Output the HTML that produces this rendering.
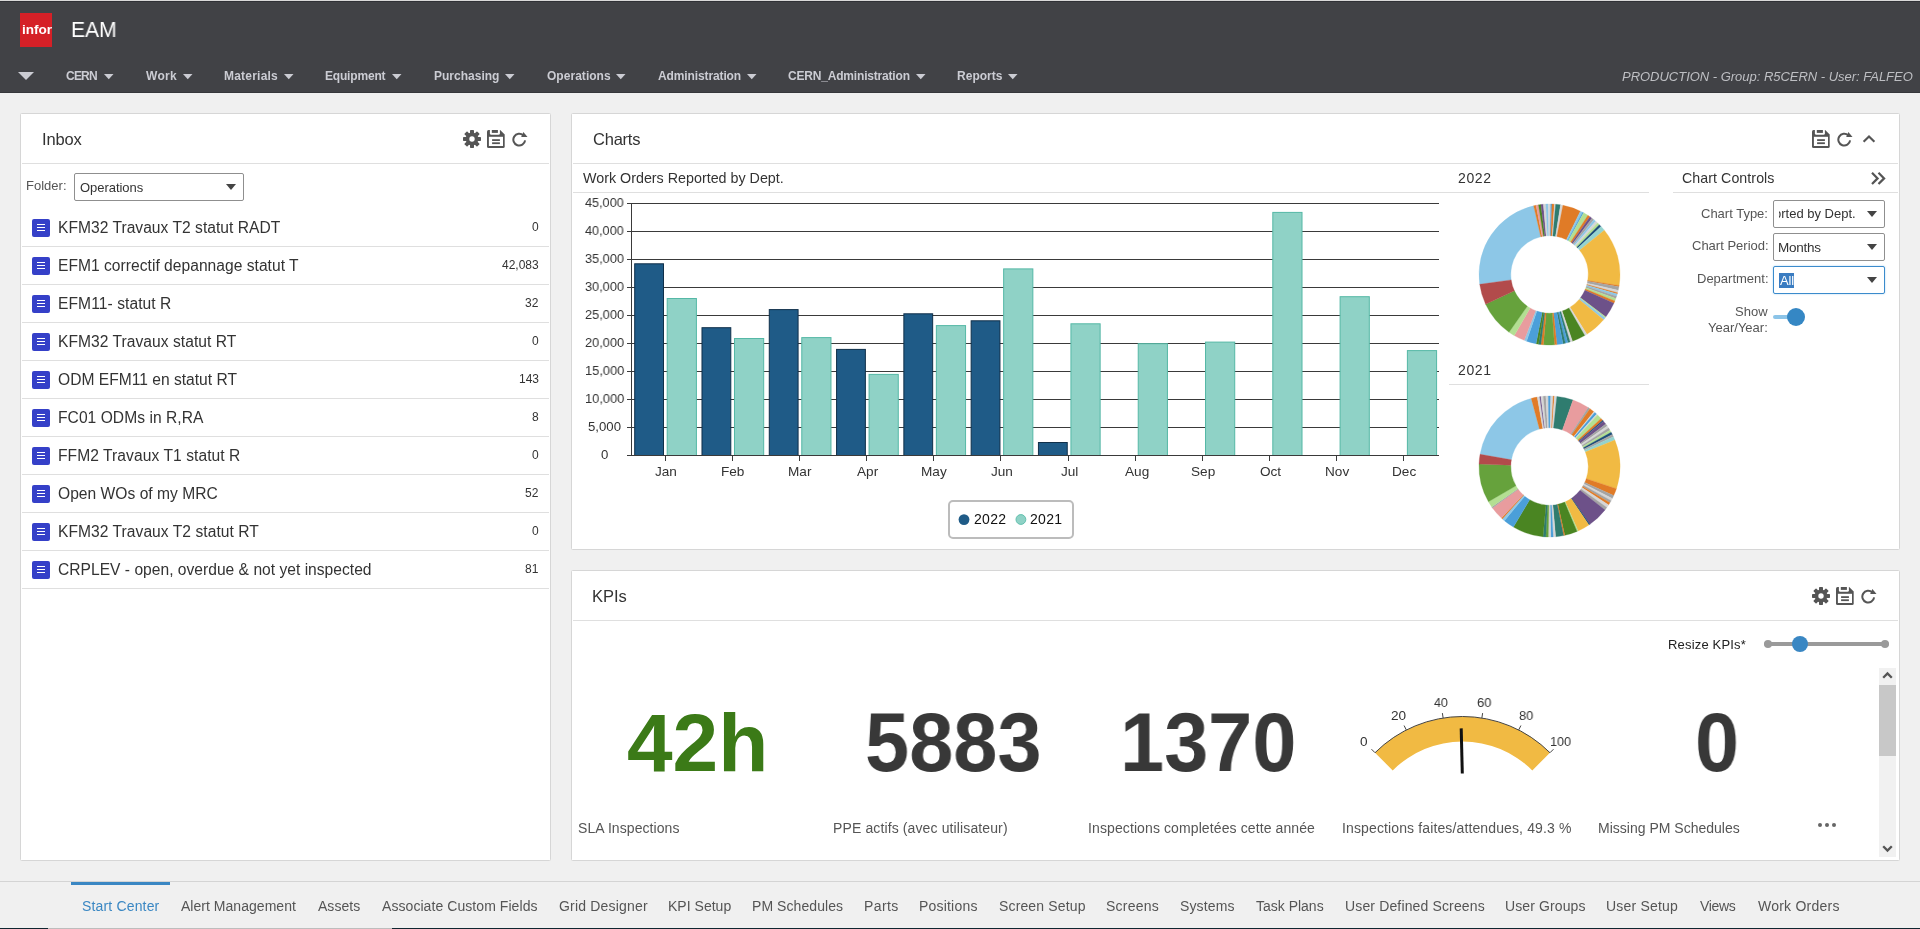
<!DOCTYPE html>
<html><head><meta charset="utf-8"><title>EAM</title>
<style>
html,body{margin:0;padding:0;}
body{width:1920px;height:929px;overflow:hidden;position:relative;background:#f0f0f0;font-family:"Liberation Sans", sans-serif;}
.t{position:absolute;white-space:nowrap;line-height:1;font-family:"Liberation Sans", sans-serif;will-change:transform;}
</style></head><body>
<div style="position:absolute;left:0px;top:0px;width:1920px;height:93px;background:#414246"></div>
<div style="position:absolute;left:0px;top:0px;width:1920px;height:1px;background:#d9d9d9"></div>
<div style="position:absolute;left:0px;top:1px;width:1920px;height:1px;background:#303136"></div>
<div style="position:absolute;left:0px;top:92px;width:1920px;height:1px;background:#36373b"></div>
<div style="position:absolute;left:20px;top:13px;width:32px;height:34px;background:#d52027"></div>
<div class="t" style="left:21.95px;top:22.98px;font-size:13.6px;color:#fff;font-weight:bold;font-style:normal;letter-spacing:-0.051px;">infor</div>
<div class="t" style="left:71.21px;top:18.79px;font-size:21.8px;color:#fff;font-weight:normal;font-style:normal;transform:scaleX(0.9679);transform-origin:0 0;">EAM</div>
<svg style="position:absolute;left:18px;top:72px" width="16" height="8"><path d="M0 0H16L8 8Z" fill="#cbccd3"/></svg>
<div class="t" style="left:66.32px;top:69.92px;font-size:12px;color:#cbccd3;font-weight:bold;font-style:normal;letter-spacing:-0.787px;">CERN</div>
<svg style="position:absolute;left:103.7px;top:74px" width="10" height="6"><path d="M0 0H9.5L4.75 5.2Z" fill="#cbccd3"/></svg>
<div class="t" style="left:145.90px;top:69.92px;font-size:12px;color:#cbccd3;font-weight:bold;font-style:normal;letter-spacing:0.307px;">Work</div>
<svg style="position:absolute;left:182.9px;top:74px" width="10" height="6"><path d="M0 0H9.5L4.75 5.2Z" fill="#cbccd3"/></svg>
<div class="t" style="left:224.16px;top:69.92px;font-size:12px;color:#cbccd3;font-weight:bold;font-style:normal;letter-spacing:0.218px;">Materials</div>
<svg style="position:absolute;left:283.75px;top:74px" width="10" height="6"><path d="M0 0H9.5L4.75 5.2Z" fill="#cbccd3"/></svg>
<div class="t" style="left:325.41px;top:69.92px;font-size:12px;color:#cbccd3;font-weight:bold;font-style:normal;letter-spacing:-0.183px;">Equipment</div>
<svg style="position:absolute;left:391.75px;top:74px" width="10" height="6"><path d="M0 0H9.5L4.75 5.2Z" fill="#cbccd3"/></svg>
<div class="t" style="left:433.66px;top:69.92px;font-size:12px;color:#cbccd3;font-weight:bold;font-style:normal;letter-spacing:0.009px;">Purchasing</div>
<svg style="position:absolute;left:505px;top:74px" width="10" height="6"><path d="M0 0H9.5L4.75 5.2Z" fill="#cbccd3"/></svg>
<div class="t" style="left:546.52px;top:69.92px;font-size:12px;color:#cbccd3;font-weight:bold;font-style:normal;letter-spacing:0.033px;">Operations</div>
<svg style="position:absolute;left:615.8px;top:74px" width="10" height="6"><path d="M0 0H9.5L4.75 5.2Z" fill="#cbccd3"/></svg>
<div class="t" style="left:657.64px;top:69.92px;font-size:12px;color:#cbccd3;font-weight:bold;font-style:normal;letter-spacing:-0.117px;">Administration</div>
<svg style="position:absolute;left:746.7px;top:74px" width="10" height="6"><path d="M0 0H9.5L4.75 5.2Z" fill="#cbccd3"/></svg>
<div class="t" style="left:788.32px;top:69.92px;font-size:12px;color:#cbccd3;font-weight:bold;font-style:normal;letter-spacing:-0.188px;">CERN_Administration</div>
<svg style="position:absolute;left:915.8px;top:74px" width="10" height="6"><path d="M0 0H9.5L4.75 5.2Z" fill="#cbccd3"/></svg>
<div class="t" style="left:957.46px;top:69.92px;font-size:12px;color:#cbccd3;font-weight:bold;font-style:normal;letter-spacing:0.027px;">Reports</div>
<svg style="position:absolute;left:1008.3px;top:74px" width="10" height="6"><path d="M0 0H9.5L4.75 5.2Z" fill="#cbccd3"/></svg>
<div class="t" style="left:1622.11px;top:70.08px;font-size:13px;color:#bebfc3;font-weight:normal;font-style:italic;letter-spacing:-0.020px;">PRODUCTION - Group: R5CERN - User: FALFEO</div>
<div style="position:absolute;left:20px;top:113px;width:531px;height:748px;background:#fff;border:1px solid #d6d6d6;border-radius:1.5px;box-sizing:border-box"></div>
<div style="position:absolute;left:571px;top:113px;width:1329px;height:437px;background:#fff;border:1px solid #d6d6d6;border-radius:1.5px;box-sizing:border-box"></div>
<div style="position:absolute;left:571px;top:570px;width:1329px;height:291px;background:#fff;border:1px solid #d6d6d6;border-radius:1.5px;box-sizing:border-box"></div>
<div style="position:absolute;left:22px;top:163px;width:527px;height:1px;background:#dfdfdf"></div>
<div style="position:absolute;left:573px;top:163px;width:1325px;height:1px;background:#dfdfdf"></div>
<div style="position:absolute;left:573px;top:620px;width:1325px;height:1px;background:#dfdfdf"></div>
<svg style="position:absolute;left:463px;top:130px" width="18" height="18" viewBox="0 0 18 18"><g fill="#555" transform="translate(9 9)"><circle r="6.4"/><rect x="-2" y="-9" width="4" height="4.2" rx="0.7" transform="rotate(0)"/><rect x="-2" y="-9" width="4" height="4.2" rx="0.7" transform="rotate(45)"/><rect x="-2" y="-9" width="4" height="4.2" rx="0.7" transform="rotate(90)"/><rect x="-2" y="-9" width="4" height="4.2" rx="0.7" transform="rotate(135)"/><rect x="-2" y="-9" width="4" height="4.2" rx="0.7" transform="rotate(180)"/><rect x="-2" y="-9" width="4" height="4.2" rx="0.7" transform="rotate(225)"/><rect x="-2" y="-9" width="4" height="4.2" rx="0.7" transform="rotate(270)"/><rect x="-2" y="-9" width="4" height="4.2" rx="0.7" transform="rotate(315)"/></g><circle cx="9" cy="9" r="2.7" fill="#fff"/></svg>
<svg style="position:absolute;left:487px;top:130px" width="18" height="18" viewBox="0 0 18 18"><path d="M1.5 0H13.2L17.7 4.6V16.4Q17.7 17.9 16.2 17.9H1.5Q0 17.9 0 16.4V1.5Q0 0 1.5 0Z" fill="#555"/><path d="M2.9 0H12.9V3.3Q12.9 4.8 11.4 4.8H4.4Q2.9 4.8 2.9 3.3Z" fill="#fff"/><rect x="4.8" y="0" width="6.1" height="2.9" fill="#555"/><rect x="1.9" y="6.8" width="14.1" height="9.2" fill="#fff"/><rect x="5.1" y="9.2" width="7.8" height="1.8" fill="#555"/><rect x="5.1" y="12.3" width="7.8" height="1.8" fill="#555"/></svg>
<svg style="position:absolute;left:511.5px;top:132.2px" width="16" height="15" viewBox="0 0 16 15"><path d="M11.3 3.4A5.9 5.9 0 1 0 13.1 8.4" fill="none" stroke="#555" stroke-width="2"/><path d="M11.4 0L15.5 5H9.2Z" fill="#555"/></svg>
<svg style="position:absolute;left:1812px;top:130px" width="18" height="18" viewBox="0 0 18 18"><path d="M1.5 0H13.2L17.7 4.6V16.4Q17.7 17.9 16.2 17.9H1.5Q0 17.9 0 16.4V1.5Q0 0 1.5 0Z" fill="#555"/><path d="M2.9 0H12.9V3.3Q12.9 4.8 11.4 4.8H4.4Q2.9 4.8 2.9 3.3Z" fill="#fff"/><rect x="4.8" y="0" width="6.1" height="2.9" fill="#555"/><rect x="1.9" y="6.8" width="14.1" height="9.2" fill="#fff"/><rect x="5.1" y="9.2" width="7.8" height="1.8" fill="#555"/><rect x="5.1" y="12.3" width="7.8" height="1.8" fill="#555"/></svg>
<svg style="position:absolute;left:1836.8px;top:132.1px" width="16" height="15" viewBox="0 0 16 15"><path d="M11.3 3.4A5.9 5.9 0 1 0 13.1 8.4" fill="none" stroke="#555" stroke-width="2"/><path d="M11.4 0L15.5 5H9.2Z" fill="#555"/></svg>
<svg style="position:absolute;left:1862px;top:134px" width="14" height="9"><path d="M1.6 7.8L7 2.4L12.4 7.8" fill="none" stroke="#555" stroke-width="2.1"/></svg>
<svg style="position:absolute;left:1812px;top:587px" width="18" height="18" viewBox="0 0 18 18"><g fill="#555" transform="translate(9 9)"><circle r="6.4"/><rect x="-2" y="-9" width="4" height="4.2" rx="0.7" transform="rotate(0)"/><rect x="-2" y="-9" width="4" height="4.2" rx="0.7" transform="rotate(45)"/><rect x="-2" y="-9" width="4" height="4.2" rx="0.7" transform="rotate(90)"/><rect x="-2" y="-9" width="4" height="4.2" rx="0.7" transform="rotate(135)"/><rect x="-2" y="-9" width="4" height="4.2" rx="0.7" transform="rotate(180)"/><rect x="-2" y="-9" width="4" height="4.2" rx="0.7" transform="rotate(225)"/><rect x="-2" y="-9" width="4" height="4.2" rx="0.7" transform="rotate(270)"/><rect x="-2" y="-9" width="4" height="4.2" rx="0.7" transform="rotate(315)"/></g><circle cx="9" cy="9" r="2.7" fill="#fff"/></svg>
<svg style="position:absolute;left:1836px;top:587px" width="18" height="18" viewBox="0 0 18 18"><path d="M1.5 0H13.2L17.7 4.6V16.4Q17.7 17.9 16.2 17.9H1.5Q0 17.9 0 16.4V1.5Q0 0 1.5 0Z" fill="#555"/><path d="M2.9 0H12.9V3.3Q12.9 4.8 11.4 4.8H4.4Q2.9 4.8 2.9 3.3Z" fill="#fff"/><rect x="4.8" y="0" width="6.1" height="2.9" fill="#555"/><rect x="1.9" y="6.8" width="14.1" height="9.2" fill="#fff"/><rect x="5.1" y="9.2" width="7.8" height="1.8" fill="#555"/><rect x="5.1" y="12.3" width="7.8" height="1.8" fill="#555"/></svg>
<svg style="position:absolute;left:1860.5px;top:589.3px" width="16" height="15" viewBox="0 0 16 15"><path d="M11.3 3.4A5.9 5.9 0 1 0 13.1 8.4" fill="none" stroke="#555" stroke-width="2"/><path d="M11.4 0L15.5 5H9.2Z" fill="#555"/></svg>
<div class="t" style="left:41.62px;top:131.34px;font-size:16.5px;color:#333;font-weight:normal;font-style:normal;letter-spacing:-0.169px;">Inbox</div>
<div class="t" style="left:25.86px;top:178.58px;font-size:13px;color:#555;font-weight:normal;font-style:normal;letter-spacing:0.013px;">Folder:</div>
<div style="position:absolute;left:74px;top:173px;width:170px;height:28px;border:1px solid #8f8f8f;border-radius:2px;box-sizing:border-box;background:#fff"></div>
<div class="t" style="left:79.55px;top:180.68px;font-size:13px;color:#333;font-weight:normal;font-style:normal;letter-spacing:-0.048px;">Operations</div>
<svg style="position:absolute;left:226px;top:184px" width="10" height="6"><path d="M0 0H10L5 6Z" fill="#444"/></svg>
<div style="position:absolute;left:32px;top:219px;width:18px;height:18px;background:#3540c8;border-radius:2px"></div>
<div style="position:absolute;left:37px;top:223.8px;width:8px;height:1.3px;background:#fff"></div>
<div style="position:absolute;left:37px;top:226.9px;width:8px;height:1.3px;background:#fff"></div>
<div style="position:absolute;left:37px;top:230.0px;width:8px;height:1.3px;background:#fff"></div>
<div class="t" style="left:57.65px;top:219.50px;font-size:15.6px;color:#333;font-weight:normal;font-style:normal;letter-spacing:0.025px;">KFM32 Travaux T2 statut RADT</div>
<div class="t" style="left:532.06px;top:220.92px;font-size:12px;color:#333;font-weight:normal;font-style:normal;">0</div>
<div style="position:absolute;left:22px;top:246px;width:527px;height:1px;background:#dfdfdf"></div>
<div style="position:absolute;left:32px;top:257px;width:18px;height:18px;background:#3540c8;border-radius:2px"></div>
<div style="position:absolute;left:37px;top:261.8px;width:8px;height:1.3px;background:#fff"></div>
<div style="position:absolute;left:37px;top:264.90000000000003px;width:8px;height:1.3px;background:#fff"></div>
<div style="position:absolute;left:37px;top:268.0px;width:8px;height:1.3px;background:#fff"></div>
<div class="t" style="left:57.65px;top:257.50px;font-size:15.6px;color:#333;font-weight:normal;font-style:normal;letter-spacing:0.026px;">EFM1 correctif depannage statut T</div>
<div class="t" style="left:502.18px;top:258.92px;font-size:12px;color:#333;font-weight:normal;font-style:normal;">42,083</div>
<div style="position:absolute;left:22px;top:284px;width:527px;height:1px;background:#dfdfdf"></div>
<div style="position:absolute;left:32px;top:295px;width:18px;height:18px;background:#3540c8;border-radius:2px"></div>
<div style="position:absolute;left:37px;top:299.8px;width:8px;height:1.3px;background:#fff"></div>
<div style="position:absolute;left:37px;top:302.90000000000003px;width:8px;height:1.3px;background:#fff"></div>
<div style="position:absolute;left:37px;top:306.0px;width:8px;height:1.3px;background:#fff"></div>
<div class="t" style="left:57.65px;top:295.50px;font-size:15.6px;color:#333;font-weight:normal;font-style:normal;letter-spacing:0.072px;">EFM11- statut R</div>
<div class="t" style="left:525.46px;top:296.92px;font-size:12px;color:#333;font-weight:normal;font-style:normal;">32</div>
<div style="position:absolute;left:22px;top:322px;width:527px;height:1px;background:#dfdfdf"></div>
<div style="position:absolute;left:32px;top:333px;width:18px;height:18px;background:#3540c8;border-radius:2px"></div>
<div style="position:absolute;left:37px;top:337.8px;width:8px;height:1.3px;background:#fff"></div>
<div style="position:absolute;left:37px;top:340.90000000000003px;width:8px;height:1.3px;background:#fff"></div>
<div style="position:absolute;left:37px;top:344.0px;width:8px;height:1.3px;background:#fff"></div>
<div class="t" style="left:57.65px;top:333.50px;font-size:15.6px;color:#333;font-weight:normal;font-style:normal;letter-spacing:0.045px;">KFM32 Travaux statut RT</div>
<div class="t" style="left:532.06px;top:334.92px;font-size:12px;color:#333;font-weight:normal;font-style:normal;">0</div>
<div style="position:absolute;left:22px;top:360px;width:527px;height:1px;background:#dfdfdf"></div>
<div style="position:absolute;left:32px;top:371px;width:18px;height:18px;background:#3540c8;border-radius:2px"></div>
<div style="position:absolute;left:37px;top:375.8px;width:8px;height:1.3px;background:#fff"></div>
<div style="position:absolute;left:37px;top:378.90000000000003px;width:8px;height:1.3px;background:#fff"></div>
<div style="position:absolute;left:37px;top:382.0px;width:8px;height:1.3px;background:#fff"></div>
<div class="t" style="left:58.12px;top:371.50px;font-size:15.6px;color:#333;font-weight:normal;font-style:normal;letter-spacing:0.006px;">ODM EFM11 en statut RT</div>
<div class="t" style="left:518.86px;top:372.92px;font-size:12px;color:#333;font-weight:normal;font-style:normal;">143</div>
<div style="position:absolute;left:22px;top:398px;width:527px;height:1px;background:#dfdfdf"></div>
<div style="position:absolute;left:32px;top:409px;width:18px;height:18px;background:#3540c8;border-radius:2px"></div>
<div style="position:absolute;left:37px;top:413.8px;width:8px;height:1.3px;background:#fff"></div>
<div style="position:absolute;left:37px;top:416.90000000000003px;width:8px;height:1.3px;background:#fff"></div>
<div style="position:absolute;left:37px;top:420.0px;width:8px;height:1.3px;background:#fff"></div>
<div class="t" style="left:57.65px;top:409.50px;font-size:15.6px;color:#333;font-weight:normal;font-style:normal;letter-spacing:0.046px;">FC01 ODMs in R,RA</div>
<div class="t" style="left:532.18px;top:410.92px;font-size:12px;color:#333;font-weight:normal;font-style:normal;">8</div>
<div style="position:absolute;left:22px;top:436px;width:527px;height:1px;background:#dfdfdf"></div>
<div style="position:absolute;left:32px;top:447px;width:18px;height:18px;background:#3540c8;border-radius:2px"></div>
<div style="position:absolute;left:37px;top:451.8px;width:8px;height:1.3px;background:#fff"></div>
<div style="position:absolute;left:37px;top:454.90000000000003px;width:8px;height:1.3px;background:#fff"></div>
<div style="position:absolute;left:37px;top:458.0px;width:8px;height:1.3px;background:#fff"></div>
<div class="t" style="left:57.65px;top:447.50px;font-size:15.6px;color:#333;font-weight:normal;font-style:normal;letter-spacing:0.066px;">FFM2 Travaux T1 statut R</div>
<div class="t" style="left:532.06px;top:448.92px;font-size:12px;color:#333;font-weight:normal;font-style:normal;">0</div>
<div style="position:absolute;left:22px;top:474px;width:527px;height:1px;background:#dfdfdf"></div>
<div style="position:absolute;left:32px;top:485px;width:18px;height:18px;background:#3540c8;border-radius:2px"></div>
<div style="position:absolute;left:37px;top:489.8px;width:8px;height:1.3px;background:#fff"></div>
<div style="position:absolute;left:37px;top:492.90000000000003px;width:8px;height:1.3px;background:#fff"></div>
<div style="position:absolute;left:37px;top:496.0px;width:8px;height:1.3px;background:#fff"></div>
<div class="t" style="left:58.12px;top:485.50px;font-size:15.6px;color:#333;font-weight:normal;font-style:normal;letter-spacing:0.022px;">Open WOs of my MRC</div>
<div class="t" style="left:525.46px;top:486.92px;font-size:12px;color:#333;font-weight:normal;font-style:normal;">52</div>
<div style="position:absolute;left:22px;top:512px;width:527px;height:1px;background:#dfdfdf"></div>
<div style="position:absolute;left:32px;top:523px;width:18px;height:18px;background:#3540c8;border-radius:2px"></div>
<div style="position:absolute;left:37px;top:527.8px;width:8px;height:1.3px;background:#fff"></div>
<div style="position:absolute;left:37px;top:530.9px;width:8px;height:1.3px;background:#fff"></div>
<div style="position:absolute;left:37px;top:534.0px;width:8px;height:1.3px;background:#fff"></div>
<div class="t" style="left:57.65px;top:523.50px;font-size:15.6px;color:#333;font-weight:normal;font-style:normal;letter-spacing:0.047px;">KFM32 Travaux T2 statut RT</div>
<div class="t" style="left:532.06px;top:524.92px;font-size:12px;color:#333;font-weight:normal;font-style:normal;">0</div>
<div style="position:absolute;left:22px;top:550px;width:527px;height:1px;background:#dfdfdf"></div>
<div style="position:absolute;left:32px;top:561px;width:18px;height:18px;background:#3540c8;border-radius:2px"></div>
<div style="position:absolute;left:37px;top:565.8px;width:8px;height:1.3px;background:#fff"></div>
<div style="position:absolute;left:37px;top:568.9px;width:8px;height:1.3px;background:#fff"></div>
<div style="position:absolute;left:37px;top:572.0px;width:8px;height:1.3px;background:#fff"></div>
<div class="t" style="left:58.12px;top:561.50px;font-size:15.6px;color:#333;font-weight:normal;font-style:normal;letter-spacing:0.014px;">CRPLEV - open, overdue &amp; not yet inspected</div>
<div class="t" style="left:525.46px;top:562.92px;font-size:12px;color:#333;font-weight:normal;font-style:normal;">81</div>
<div style="position:absolute;left:22px;top:588px;width:527px;height:1px;background:#dfdfdf"></div>
<div class="t" style="left:592.88px;top:131.34px;font-size:16.5px;color:#333;font-weight:normal;font-style:normal;letter-spacing:-0.231px;">Charts</div>
<div class="t" style="left:583.30px;top:170.79px;font-size:14.3px;color:#333;font-weight:normal;font-style:normal;">Work Orders Reported by Dept.</div>
<div style="position:absolute;left:573px;top:192px;width:1076px;height:1px;background:#dfdfdf"></div>
<div class="t" style="left:1458.40px;top:171.34px;font-size:14px;color:#333;font-weight:normal;font-style:normal;letter-spacing:0.593px;">2022</div>
<div class="t" style="left:1458.40px;top:363.44px;font-size:14px;color:#333;font-weight:normal;font-style:normal;letter-spacing:0.593px;">2021</div>
<div style="position:absolute;left:1449px;top:384px;width:200px;height:1px;background:#dfdfdf"></div>
<div class="t" style="left:1682.49px;top:171.37px;font-size:14.2px;color:#333;font-weight:normal;font-style:normal;letter-spacing:0.073px;">Chart Controls</div>
<div style="position:absolute;left:1673px;top:192px;width:225px;height:1px;background:#dfdfdf"></div>
<svg style="position:absolute;left:1871px;top:172px" width="16" height="13"><path d="M1 0.8L6.6 6.4L1 12M7.5 0.8L13.1 6.4L7.5 12" fill="none" stroke="#555" stroke-width="2.2"/></svg>
<svg style="position:absolute;left:0;top:0" width="1920" height="929"><line x1="627" y1="203.5" x2="1439" y2="203.5" stroke="#3a3a3a" stroke-width="1"/><line x1="627" y1="231.5" x2="1439" y2="231.5" stroke="#3a3a3a" stroke-width="1"/><line x1="627" y1="259.5" x2="1439" y2="259.5" stroke="#3a3a3a" stroke-width="1"/><line x1="627" y1="287.5" x2="1439" y2="287.5" stroke="#3a3a3a" stroke-width="1"/><line x1="627" y1="315.5" x2="1439" y2="315.5" stroke="#3a3a3a" stroke-width="1"/><line x1="627" y1="343.5" x2="1439" y2="343.5" stroke="#3a3a3a" stroke-width="1"/><line x1="627" y1="371.5" x2="1439" y2="371.5" stroke="#3a3a3a" stroke-width="1"/><line x1="627" y1="399.5" x2="1439" y2="399.5" stroke="#3a3a3a" stroke-width="1"/><line x1="627" y1="427.5" x2="1439" y2="427.5" stroke="#3a3a3a" stroke-width="1"/><line x1="627" y1="455.5" x2="1439" y2="455.5" stroke="#3a3a3a" stroke-width="1"/><line x1="631.5" y1="203" x2="631.5" y2="456" stroke="#3a3a3a" stroke-width="1"/><rect x="634.70" y="263.8" width="28.8" height="191.7" fill="#1f5b87" stroke="#10304a" stroke-width="1"/><rect x="667.20" y="298.5" width="29.2" height="157.0" fill="#8fd2c6" stroke="#55b8a6" stroke-width="1"/><line x1="665.5" y1="455" x2="665.5" y2="461" stroke="#3a3a3a" stroke-width="1"/><rect x="701.99" y="327.7" width="28.8" height="127.8" fill="#1f5b87" stroke="#10304a" stroke-width="1"/><rect x="734.49" y="338.5" width="29.2" height="117.0" fill="#8fd2c6" stroke="#55b8a6" stroke-width="1"/><line x1="732.5" y1="455" x2="732.5" y2="461" stroke="#3a3a3a" stroke-width="1"/><rect x="769.28" y="309.6" width="28.8" height="145.9" fill="#1f5b87" stroke="#10304a" stroke-width="1"/><rect x="801.78" y="337.6" width="29.2" height="117.9" fill="#8fd2c6" stroke="#55b8a6" stroke-width="1"/><line x1="799.5" y1="455" x2="799.5" y2="461" stroke="#3a3a3a" stroke-width="1"/><rect x="836.57" y="349.4" width="28.8" height="106.1" fill="#1f5b87" stroke="#10304a" stroke-width="1"/><rect x="869.07" y="374.4" width="29.2" height="81.1" fill="#8fd2c6" stroke="#55b8a6" stroke-width="1"/><line x1="866.5" y1="455" x2="866.5" y2="461" stroke="#3a3a3a" stroke-width="1"/><rect x="903.86" y="313.8" width="28.8" height="141.7" fill="#1f5b87" stroke="#10304a" stroke-width="1"/><rect x="936.36" y="325.6" width="29.2" height="129.9" fill="#8fd2c6" stroke="#55b8a6" stroke-width="1"/><line x1="933.5" y1="455" x2="933.5" y2="461" stroke="#3a3a3a" stroke-width="1"/><rect x="971.15" y="320.8" width="28.8" height="134.7" fill="#1f5b87" stroke="#10304a" stroke-width="1"/><rect x="1003.65" y="268.9" width="29.2" height="186.6" fill="#8fd2c6" stroke="#55b8a6" stroke-width="1"/><line x1="1000.5" y1="455" x2="1000.5" y2="461" stroke="#3a3a3a" stroke-width="1"/><rect x="1038.44" y="442.5" width="28.8" height="13.0" fill="#1f5b87" stroke="#10304a" stroke-width="1"/><rect x="1070.94" y="323.8" width="29.2" height="131.7" fill="#8fd2c6" stroke="#55b8a6" stroke-width="1"/><line x1="1068.5" y1="455" x2="1068.5" y2="461" stroke="#3a3a3a" stroke-width="1"/><rect x="1138.23" y="343.7" width="29.2" height="111.8" fill="#8fd2c6" stroke="#55b8a6" stroke-width="1"/><line x1="1135.5" y1="455" x2="1135.5" y2="461" stroke="#3a3a3a" stroke-width="1"/><rect x="1205.52" y="342.1" width="29.2" height="113.4" fill="#8fd2c6" stroke="#55b8a6" stroke-width="1"/><line x1="1202.5" y1="455" x2="1202.5" y2="461" stroke="#3a3a3a" stroke-width="1"/><rect x="1272.81" y="212.4" width="29.2" height="243.1" fill="#8fd2c6" stroke="#55b8a6" stroke-width="1"/><line x1="1269.5" y1="455" x2="1269.5" y2="461" stroke="#3a3a3a" stroke-width="1"/><rect x="1340.10" y="296.7" width="29.2" height="158.8" fill="#8fd2c6" stroke="#55b8a6" stroke-width="1"/><line x1="1336.5" y1="455" x2="1336.5" y2="461" stroke="#3a3a3a" stroke-width="1"/><rect x="1407.39" y="350.6" width="29.2" height="104.9" fill="#8fd2c6" stroke="#55b8a6" stroke-width="1"/><line x1="1403.5" y1="455" x2="1403.5" y2="461" stroke="#3a3a3a" stroke-width="1"/><line x1="627" y1="203.5" x2="632" y2="203.5" stroke="#3a3a3a" stroke-width="1"/><line x1="627" y1="231.5" x2="632" y2="231.5" stroke="#3a3a3a" stroke-width="1"/><line x1="627" y1="259.5" x2="632" y2="259.5" stroke="#3a3a3a" stroke-width="1"/><line x1="627" y1="287.5" x2="632" y2="287.5" stroke="#3a3a3a" stroke-width="1"/><line x1="627" y1="315.5" x2="632" y2="315.5" stroke="#3a3a3a" stroke-width="1"/><line x1="627" y1="343.5" x2="632" y2="343.5" stroke="#3a3a3a" stroke-width="1"/><line x1="627" y1="371.5" x2="632" y2="371.5" stroke="#3a3a3a" stroke-width="1"/><line x1="627" y1="399.5" x2="632" y2="399.5" stroke="#3a3a3a" stroke-width="1"/><line x1="627" y1="427.5" x2="632" y2="427.5" stroke="#3a3a3a" stroke-width="1"/><line x1="627" y1="455.5" x2="632" y2="455.5" stroke="#3a3a3a" stroke-width="1"/><line x1="627" y1="455.5" x2="1439" y2="455.5" stroke="#3a3a3a" stroke-width="1"/></svg>
<div class="t" style="left:585.35px;top:196.01px;font-size:13.2px;color:#333;font-weight:normal;font-style:normal;transform:scaleX(0.9596);transform-origin:0 0;">45,000</div>
<div class="t" style="left:585.35px;top:224.01px;font-size:13.2px;color:#333;font-weight:normal;font-style:normal;transform:scaleX(0.9596);transform-origin:0 0;">40,000</div>
<div class="t" style="left:585.09px;top:252.01px;font-size:13.2px;color:#333;font-weight:normal;font-style:normal;transform:scaleX(0.9660);transform-origin:0 0;">35,000</div>
<div class="t" style="left:585.09px;top:280.01px;font-size:13.2px;color:#333;font-weight:normal;font-style:normal;transform:scaleX(0.9660);transform-origin:0 0;">30,000</div>
<div class="t" style="left:584.96px;top:308.01px;font-size:13.2px;color:#333;font-weight:normal;font-style:normal;transform:scaleX(0.9693);transform-origin:0 0;">25,000</div>
<div class="t" style="left:584.96px;top:336.01px;font-size:13.2px;color:#333;font-weight:normal;font-style:normal;transform:scaleX(0.9693);transform-origin:0 0;">20,000</div>
<div class="t" style="left:584.70px;top:364.01px;font-size:13.2px;color:#333;font-weight:normal;font-style:normal;transform:scaleX(0.9759);transform-origin:0 0;">15,000</div>
<div class="t" style="left:584.70px;top:392.01px;font-size:13.2px;color:#333;font-weight:normal;font-style:normal;transform:scaleX(0.9759);transform-origin:0 0;">10,000</div>
<div class="t" style="left:588.23px;top:420.01px;font-size:13.2px;color:#333;font-weight:normal;font-style:normal;transform:scaleX(0.9883);transform-origin:0 0;">5,000</div>
<div class="t" style="left:601.10px;top:448.01px;font-size:13.2px;color:#333;font-weight:normal;font-style:normal;transform:scaleX(0.9470);transform-origin:0 0;">0</div>
<div class="t" style="left:655.42px;top:465.08px;font-size:13.6px;color:#333;font-weight:normal;font-style:normal;transform:scaleX(1.0000);transform-origin:0 0;">Jan</div>
<div class="t" style="left:721.22px;top:465.08px;font-size:13.6px;color:#333;font-weight:normal;font-style:normal;transform:scaleX(1.0000);transform-origin:0 0;">Feb</div>
<div class="t" style="left:788.25px;top:465.08px;font-size:13.6px;color:#333;font-weight:normal;font-style:normal;transform:scaleX(1.0000);transform-origin:0 0;">Mar</div>
<div class="t" style="left:857.11px;top:465.08px;font-size:13.6px;color:#333;font-weight:normal;font-style:normal;transform:scaleX(1.0000);transform-origin:0 0;">Apr</div>
<div class="t" style="left:921.34px;top:465.08px;font-size:13.6px;color:#333;font-weight:normal;font-style:normal;transform:scaleX(1.0000);transform-origin:0 0;">May</div>
<div class="t" style="left:991.22px;top:465.08px;font-size:13.6px;color:#333;font-weight:normal;font-style:normal;transform:scaleX(1.0000);transform-origin:0 0;">Jun</div>
<div class="t" style="left:1060.63px;top:465.08px;font-size:13.6px;color:#333;font-weight:normal;font-style:normal;transform:scaleX(1.0000);transform-origin:0 0;">Jul</div>
<div class="t" style="left:1124.59px;top:465.08px;font-size:13.6px;color:#333;font-weight:normal;font-style:normal;transform:scaleX(1.0000);transform-origin:0 0;">Aug</div>
<div class="t" style="left:1191.21px;top:465.08px;font-size:13.6px;color:#333;font-weight:normal;font-style:normal;transform:scaleX(1.0000);transform-origin:0 0;">Sep</div>
<div class="t" style="left:1259.66px;top:465.08px;font-size:13.6px;color:#333;font-weight:normal;font-style:normal;transform:scaleX(1.0000);transform-origin:0 0;">Oct</div>
<div class="t" style="left:1325.05px;top:465.08px;font-size:13.6px;color:#333;font-weight:normal;font-style:normal;transform:scaleX(1.0000);transform-origin:0 0;">Nov</div>
<div class="t" style="left:1392.42px;top:465.08px;font-size:13.6px;color:#333;font-weight:normal;font-style:normal;transform:scaleX(1.0000);transform-origin:0 0;">Dec</div>
<div style="position:absolute;left:948px;top:500px;width:126px;height:39px;border:2px solid #bcbcbc;border-radius:5px;box-sizing:border-box;background:#fff"></div>
<svg style="position:absolute;left:958px;top:514px" width="70" height="12"><circle cx="6" cy="5.6" r="5.4" fill="#1f5b87"/><circle cx="62.9" cy="5.5" r="4.9" fill="#8fd2c6" stroke="#62c0ae" stroke-width="1"/></svg>
<div class="t" style="left:973.70px;top:512.34px;font-size:14px;color:#111;font-weight:normal;font-style:normal;letter-spacing:0.327px;">2022</div>
<div class="t" style="left:1030.10px;top:512.34px;font-size:14px;color:#111;font-weight:normal;font-style:normal;letter-spacing:0.293px;">2021</div>
<svg style="position:absolute;left:1477.7px;top:202.9px" width="143.0" height="143.0" viewBox="1477.7 202.89999999999998 143.0 143.0"><path d="M1479.39 284.21A70.5 70.5 0 0 1 1533.34 205.71L1540.49 236.69A38.7 38.7 0 0 0 1510.88 279.79Z" fill="#8dc7e7" stroke="#8dc7e7" stroke-width="0.3"/><path d="M1533.34 205.71A70.5 70.5 0 0 1 1535.75 205.20L1541.82 236.41A38.7 38.7 0 0 0 1540.49 236.69Z" fill="#e07b27" stroke="#e07b27" stroke-width="0.3"/><path d="M1535.75 205.20A70.5 70.5 0 0 1 1538.17 204.77L1543.15 236.18A38.7 38.7 0 0 0 1541.82 236.41Z" fill="#e89c9e" stroke="#e89c9e" stroke-width="0.3"/><path d="M1538.17 204.77A70.5 70.5 0 0 1 1540.61 204.43L1544.48 235.99A38.7 38.7 0 0 0 1543.15 236.18Z" fill="#4a8522" stroke="#4a8522" stroke-width="0.3"/><path d="M1540.61 204.43A70.5 70.5 0 0 1 1543.06 204.17L1545.83 235.85A38.7 38.7 0 0 0 1544.48 235.99Z" fill="#6d5189" stroke="#6d5189" stroke-width="0.3"/><path d="M1543.06 204.17A70.5 70.5 0 0 1 1545.51 204.00L1547.17 235.75A38.7 38.7 0 0 0 1545.83 235.85Z" fill="#d6d6d6" stroke="#d6d6d6" stroke-width="0.3"/><path d="M1545.51 204.00A70.5 70.5 0 0 1 1547.97 203.91L1548.52 235.71A38.7 38.7 0 0 0 1547.17 235.75Z" fill="#8dc7e7" stroke="#8dc7e7" stroke-width="0.3"/><path d="M1547.97 203.91A70.5 70.5 0 0 1 1550.43 203.91L1549.88 235.71A38.7 38.7 0 0 0 1548.52 235.71Z" fill="#d6d6d6" stroke="#d6d6d6" stroke-width="0.3"/><path d="M1550.43 203.91A70.5 70.5 0 0 1 1551.66 203.94L1550.55 235.72A38.7 38.7 0 0 0 1549.88 235.71Z" fill="#4b9fd9" stroke="#4b9fd9" stroke-width="0.3"/><path d="M1551.66 203.94A70.5 70.5 0 0 1 1554.12 204.07L1551.90 235.79A38.7 38.7 0 0 0 1550.55 235.72Z" fill="#e07b27" stroke="#e07b27" stroke-width="0.3"/><path d="M1554.12 204.07A70.5 70.5 0 0 1 1555.34 204.17L1552.57 235.85A38.7 38.7 0 0 0 1551.90 235.79Z" fill="#d6d6d6" stroke="#d6d6d6" stroke-width="0.3"/><path d="M1555.34 204.17A70.5 70.5 0 0 1 1560.23 204.77L1555.25 236.18A38.7 38.7 0 0 0 1552.57 235.85Z" fill="#2f7c6f" stroke="#2f7c6f" stroke-width="0.3"/><path d="M1560.23 204.77A70.5 70.5 0 0 1 1562.65 205.20L1556.58 236.41A38.7 38.7 0 0 0 1555.25 236.18Z" fill="#d6d6d6" stroke="#d6d6d6" stroke-width="0.3"/><path d="M1562.65 205.20A70.5 70.5 0 0 1 1580.11 211.04L1566.16 239.62A38.7 38.7 0 0 0 1556.58 236.41Z" fill="#e07b27" stroke="#e07b27" stroke-width="0.3"/><path d="M1580.11 211.04A70.5 70.5 0 0 1 1582.30 212.15L1567.37 240.23A38.7 38.7 0 0 0 1566.16 239.62Z" fill="#8dc7e7" stroke="#8dc7e7" stroke-width="0.3"/><path d="M1582.30 212.15A70.5 70.5 0 0 1 1583.38 212.74L1567.96 240.55A38.7 38.7 0 0 0 1567.37 240.23Z" fill="#4b9fd9" stroke="#4b9fd9" stroke-width="0.3"/><path d="M1583.38 212.74A70.5 70.5 0 0 1 1587.60 215.27L1570.28 241.94A38.7 38.7 0 0 0 1567.96 240.55Z" fill="#b3df92" stroke="#b3df92" stroke-width="0.3"/><path d="M1587.60 215.27A70.5 70.5 0 0 1 1589.64 216.65L1571.40 242.70A38.7 38.7 0 0 0 1570.28 241.94Z" fill="#e07b27" stroke="#e07b27" stroke-width="0.3"/><path d="M1589.64 216.65A70.5 70.5 0 0 1 1591.63 218.10L1572.49 243.49A38.7 38.7 0 0 0 1571.40 242.70Z" fill="#6d5189" stroke="#6d5189" stroke-width="0.3"/><path d="M1591.63 218.10A70.5 70.5 0 0 1 1593.57 219.61L1573.55 244.32A38.7 38.7 0 0 0 1572.49 243.49Z" fill="#a4a4a4" stroke="#a4a4a4" stroke-width="0.3"/><path d="M1593.57 219.61A70.5 70.5 0 0 1 1595.45 221.19L1574.59 245.19A38.7 38.7 0 0 0 1573.55 244.32Z" fill="#8dc7e7" stroke="#8dc7e7" stroke-width="0.3"/><path d="M1595.45 221.19A70.5 70.5 0 0 1 1597.28 222.84L1575.59 246.10A38.7 38.7 0 0 0 1574.59 245.19Z" fill="#d6d6d6" stroke="#d6d6d6" stroke-width="0.3"/><path d="M1597.28 222.84A70.5 70.5 0 0 1 1599.05 224.55L1576.57 247.03A38.7 38.7 0 0 0 1575.59 246.10Z" fill="#b3df92" stroke="#b3df92" stroke-width="0.3"/><path d="M1599.05 224.55A70.5 70.5 0 0 1 1600.76 226.32L1577.50 248.01A38.7 38.7 0 0 0 1576.57 247.03Z" fill="#1e4e79" stroke="#1e4e79" stroke-width="0.3"/><path d="M1600.76 226.32A70.5 70.5 0 0 1 1603.99 230.03L1579.28 250.05A38.7 38.7 0 0 0 1577.50 248.01Z" fill="#94d3ce" stroke="#94d3ce" stroke-width="0.3"/><path d="M1603.99 230.03A70.5 70.5 0 0 1 1618.83 285.43L1587.42 280.45A38.7 38.7 0 0 0 1579.28 250.05Z" fill="#f1ba43" stroke="#f1ba43" stroke-width="0.3"/><path d="M1618.83 285.43A70.5 70.5 0 0 1 1618.63 286.64L1587.31 281.12A38.7 38.7 0 0 0 1587.42 280.45Z" fill="#e07b27" stroke="#e07b27" stroke-width="0.3"/><path d="M1618.63 286.64A70.5 70.5 0 0 1 1617.89 290.26L1586.91 283.11A38.7 38.7 0 0 0 1587.31 281.12Z" fill="#a4a4a4" stroke="#a4a4a4" stroke-width="0.3"/><path d="M1617.89 290.26A70.5 70.5 0 0 1 1617.30 292.65L1586.58 284.42A38.7 38.7 0 0 0 1586.91 283.11Z" fill="#d6d6d6" stroke="#d6d6d6" stroke-width="0.3"/><path d="M1617.30 292.65A70.5 70.5 0 0 1 1616.97 293.83L1586.40 285.07A38.7 38.7 0 0 0 1586.58 284.42Z" fill="#e07b27" stroke="#e07b27" stroke-width="0.3"/><path d="M1616.97 293.83A70.5 70.5 0 0 1 1616.25 296.19L1586.01 286.36A38.7 38.7 0 0 0 1586.40 285.07Z" fill="#8dc7e7" stroke="#8dc7e7" stroke-width="0.3"/><path d="M1616.25 296.19A70.5 70.5 0 0 1 1615.45 298.51L1585.57 287.64A38.7 38.7 0 0 0 1586.01 286.36Z" fill="#a4a4a4" stroke="#a4a4a4" stroke-width="0.3"/><path d="M1615.45 298.51A70.5 70.5 0 0 1 1614.57 300.81L1585.08 288.90A38.7 38.7 0 0 0 1585.57 287.64Z" fill="#b3df92" stroke="#b3df92" stroke-width="0.3"/><path d="M1614.57 300.81A70.5 70.5 0 0 1 1613.60 303.07L1584.55 290.14A38.7 38.7 0 0 0 1585.08 288.90Z" fill="#e07b27" stroke="#e07b27" stroke-width="0.3"/><path d="M1613.60 303.07A70.5 70.5 0 0 1 1605.50 316.83L1580.11 297.69A38.7 38.7 0 0 0 1584.55 290.14Z" fill="#6d5189" stroke="#6d5189" stroke-width="0.3"/><path d="M1605.50 316.83A70.5 70.5 0 0 1 1604.75 317.80L1579.70 298.23A38.7 38.7 0 0 0 1580.11 297.69Z" fill="#b3df92" stroke="#b3df92" stroke-width="0.3"/><path d="M1604.75 317.80A70.5 70.5 0 0 1 1603.21 319.72L1578.85 299.28A38.7 38.7 0 0 0 1579.70 298.23Z" fill="#8dc7e7" stroke="#8dc7e7" stroke-width="0.3"/><path d="M1603.21 319.72A70.5 70.5 0 0 1 1586.56 334.19L1569.71 307.22A38.7 38.7 0 0 0 1578.85 299.28Z" fill="#f1ba43" stroke="#f1ba43" stroke-width="0.3"/><path d="M1586.56 334.19A70.5 70.5 0 0 1 1584.45 335.45L1568.55 307.92A38.7 38.7 0 0 0 1569.71 307.22Z" fill="#d6d6d6" stroke="#d6d6d6" stroke-width="0.3"/><path d="M1584.45 335.45A70.5 70.5 0 0 1 1572.15 341.06L1561.80 310.99A38.7 38.7 0 0 0 1568.55 307.92Z" fill="#4a8522" stroke="#4a8522" stroke-width="0.3"/><path d="M1572.15 341.06A70.5 70.5 0 0 1 1569.81 341.82L1560.51 311.41A38.7 38.7 0 0 0 1561.80 310.99Z" fill="#d6d6d6" stroke="#d6d6d6" stroke-width="0.3"/><path d="M1569.81 341.82A70.5 70.5 0 0 1 1567.45 342.50L1559.22 311.78A38.7 38.7 0 0 0 1560.51 311.41Z" fill="#2f7c6f" stroke="#2f7c6f" stroke-width="0.3"/><path d="M1567.45 342.50A70.5 70.5 0 0 1 1565.06 343.09L1557.91 312.11A38.7 38.7 0 0 0 1559.22 311.78Z" fill="#4b9fd9" stroke="#4b9fd9" stroke-width="0.3"/><path d="M1565.06 343.09A70.5 70.5 0 0 1 1562.65 343.60L1556.58 312.39A38.7 38.7 0 0 0 1557.91 312.11Z" fill="#2f7c6f" stroke="#2f7c6f" stroke-width="0.3"/><path d="M1562.65 343.60A70.5 70.5 0 0 1 1556.57 344.51L1553.25 312.89A38.7 38.7 0 0 0 1556.58 312.39Z" fill="#4b9fd9" stroke="#4b9fd9" stroke-width="0.3"/><path d="M1556.57 344.51A70.5 70.5 0 0 1 1554.12 344.73L1551.90 313.01A38.7 38.7 0 0 0 1553.25 312.89Z" fill="#e07b27" stroke="#e07b27" stroke-width="0.3"/><path d="M1554.12 344.73A70.5 70.5 0 0 1 1543.06 344.63L1545.83 312.95A38.7 38.7 0 0 0 1551.90 313.01Z" fill="#66a23c" stroke="#66a23c" stroke-width="0.3"/><path d="M1543.06 344.63A70.5 70.5 0 0 1 1540.61 344.37L1544.48 312.81A38.7 38.7 0 0 0 1545.83 312.95Z" fill="#e07b27" stroke="#e07b27" stroke-width="0.3"/><path d="M1540.61 344.37A70.5 70.5 0 0 1 1538.17 344.03L1543.15 312.62A38.7 38.7 0 0 0 1544.48 312.81Z" fill="#2f7c6f" stroke="#2f7c6f" stroke-width="0.3"/><path d="M1538.17 344.03A70.5 70.5 0 0 1 1535.75 343.60L1541.82 312.39A38.7 38.7 0 0 0 1543.15 312.62Z" fill="#4a8522" stroke="#4a8522" stroke-width="0.3"/><path d="M1535.75 343.60A70.5 70.5 0 0 1 1526.25 341.06L1536.60 310.99A38.7 38.7 0 0 0 1541.82 312.39Z" fill="#4b9fd9" stroke="#4b9fd9" stroke-width="0.3"/><path d="M1526.25 341.06A70.5 70.5 0 0 1 1523.94 340.22L1535.33 310.53A38.7 38.7 0 0 0 1536.60 310.99Z" fill="#8dc7e7" stroke="#8dc7e7" stroke-width="0.3"/><path d="M1523.94 340.22A70.5 70.5 0 0 1 1513.95 335.45L1529.85 307.92A38.7 38.7 0 0 0 1535.33 310.53Z" fill="#e89c9e" stroke="#e89c9e" stroke-width="0.3"/><path d="M1513.95 335.45A70.5 70.5 0 0 1 1508.76 332.15L1527.00 306.10A38.7 38.7 0 0 0 1529.85 307.92Z" fill="#b3df92" stroke="#b3df92" stroke-width="0.3"/><path d="M1508.76 332.15A70.5 70.5 0 0 1 1485.31 304.19L1514.13 290.76A38.7 38.7 0 0 0 1527.00 306.10Z" fill="#66a23c" stroke="#66a23c" stroke-width="0.3"/><path d="M1485.31 304.19A70.5 70.5 0 0 1 1479.39 284.21L1510.88 279.79A38.7 38.7 0 0 0 1514.13 290.76Z" fill="#b24b4b" stroke="#b24b4b" stroke-width="0.3"/></svg>
<svg style="position:absolute;left:1477.5px;top:394.8px" width="143.0" height="143.0" viewBox="1477.5 394.8 143.0 143.0"><path d="M1479.57 454.06A70.5 70.5 0 0 1 1530.75 398.20L1538.98 428.92A38.7 38.7 0 0 0 1510.89 459.58Z" fill="#8dc7e7" stroke="#8dc7e7" stroke-width="0.3"/><path d="M1530.75 398.20A70.5 70.5 0 0 1 1536.76 396.87L1542.28 428.19A38.7 38.7 0 0 0 1538.98 428.92Z" fill="#e07b27" stroke="#e07b27" stroke-width="0.3"/><path d="M1536.76 396.87A70.5 70.5 0 0 1 1539.19 396.49L1543.61 427.98A38.7 38.7 0 0 0 1542.28 428.19Z" fill="#d6d6d6" stroke="#d6d6d6" stroke-width="0.3"/><path d="M1539.19 396.49A70.5 70.5 0 0 1 1540.41 396.33L1544.28 427.89A38.7 38.7 0 0 0 1543.61 427.98Z" fill="#6d5189" stroke="#6d5189" stroke-width="0.3"/><path d="M1540.41 396.33A70.5 70.5 0 0 1 1542.86 396.07L1545.63 427.75A38.7 38.7 0 0 0 1544.28 427.89Z" fill="#d6d6d6" stroke="#d6d6d6" stroke-width="0.3"/><path d="M1542.86 396.07A70.5 70.5 0 0 1 1545.31 395.90L1546.97 427.65A38.7 38.7 0 0 0 1545.63 427.75Z" fill="#a4a4a4" stroke="#a4a4a4" stroke-width="0.3"/><path d="M1545.31 395.90A70.5 70.5 0 0 1 1547.77 395.81L1548.32 427.61A38.7 38.7 0 0 0 1546.97 427.65Z" fill="#d6d6d6" stroke="#d6d6d6" stroke-width="0.3"/><path d="M1547.77 395.81A70.5 70.5 0 0 1 1550.23 395.81L1549.68 427.61A38.7 38.7 0 0 0 1548.32 427.61Z" fill="#4b9fd9" stroke="#4b9fd9" stroke-width="0.3"/><path d="M1550.23 395.81A70.5 70.5 0 0 1 1552.69 395.90L1551.03 427.65A38.7 38.7 0 0 0 1549.68 427.61Z" fill="#d6d6d6" stroke="#d6d6d6" stroke-width="0.3"/><path d="M1552.69 395.90A70.5 70.5 0 0 1 1553.92 395.97L1551.70 427.69A38.7 38.7 0 0 0 1551.03 427.65Z" fill="#e07b27" stroke="#e07b27" stroke-width="0.3"/><path d="M1553.92 395.97A70.5 70.5 0 0 1 1556.37 396.19L1553.05 427.81A38.7 38.7 0 0 0 1551.70 427.69Z" fill="#d6d6d6" stroke="#d6d6d6" stroke-width="0.3"/><path d="M1556.37 396.19A70.5 70.5 0 0 1 1572.53 399.84L1561.92 429.82A38.7 38.7 0 0 0 1553.05 427.81Z" fill="#2f7c6f" stroke="#2f7c6f" stroke-width="0.3"/><path d="M1572.53 399.84A70.5 70.5 0 0 1 1587.71 407.38L1570.25 433.95A38.7 38.7 0 0 0 1561.92 429.82Z" fill="#e89c9e" stroke="#e89c9e" stroke-width="0.3"/><path d="M1587.71 407.38A70.5 70.5 0 0 1 1589.44 408.55L1571.20 434.60A38.7 38.7 0 0 0 1570.25 433.95Z" fill="#a4a4a4" stroke="#a4a4a4" stroke-width="0.3"/><path d="M1589.44 408.55A70.5 70.5 0 0 1 1593.37 411.51L1573.35 436.22A38.7 38.7 0 0 0 1571.20 434.60Z" fill="#e07b27" stroke="#e07b27" stroke-width="0.3"/><path d="M1593.37 411.51A70.5 70.5 0 0 1 1594.32 412.29L1573.88 436.65A38.7 38.7 0 0 0 1573.35 436.22Z" fill="#d6d6d6" stroke="#d6d6d6" stroke-width="0.3"/><path d="M1594.32 412.29A70.5 70.5 0 0 1 1596.17 413.91L1574.90 437.54A38.7 38.7 0 0 0 1573.88 436.65Z" fill="#4b9fd9" stroke="#4b9fd9" stroke-width="0.3"/><path d="M1596.17 413.91A70.5 70.5 0 0 1 1597.08 414.74L1575.39 438.00A38.7 38.7 0 0 0 1574.90 437.54Z" fill="#d6d6d6" stroke="#d6d6d6" stroke-width="0.3"/><path d="M1597.08 414.74A70.5 70.5 0 0 1 1600.56 418.22L1577.30 439.91A38.7 38.7 0 0 0 1575.39 438.00Z" fill="#b3df92" stroke="#b3df92" stroke-width="0.3"/><path d="M1600.56 418.22A70.5 70.5 0 0 1 1602.21 420.05L1578.21 440.91A38.7 38.7 0 0 0 1577.30 439.91Z" fill="#e07b27" stroke="#e07b27" stroke-width="0.3"/><path d="M1602.21 420.05A70.5 70.5 0 0 1 1603.01 420.98L1578.65 441.42A38.7 38.7 0 0 0 1578.21 440.91Z" fill="#1e4e79" stroke="#1e4e79" stroke-width="0.3"/><path d="M1603.01 420.98A70.5 70.5 0 0 1 1605.30 423.87L1579.91 443.01A38.7 38.7 0 0 0 1578.65 441.42Z" fill="#6d5189" stroke="#6d5189" stroke-width="0.3"/><path d="M1605.30 423.87A70.5 70.5 0 0 1 1606.75 425.86L1580.70 444.10A38.7 38.7 0 0 0 1579.91 443.01Z" fill="#a4a4a4" stroke="#a4a4a4" stroke-width="0.3"/><path d="M1606.75 425.86A70.5 70.5 0 0 1 1608.13 427.90L1581.46 445.22A38.7 38.7 0 0 0 1580.70 444.10Z" fill="#d6d6d6" stroke="#d6d6d6" stroke-width="0.3"/><path d="M1608.13 427.90A70.5 70.5 0 0 1 1609.43 429.99L1582.17 446.37A38.7 38.7 0 0 0 1581.46 445.22Z" fill="#a4a4a4" stroke="#a4a4a4" stroke-width="0.3"/><path d="M1609.43 429.99A70.5 70.5 0 0 1 1610.66 432.12L1582.85 447.54A38.7 38.7 0 0 0 1582.17 446.37Z" fill="#b3df92" stroke="#b3df92" stroke-width="0.3"/><path d="M1610.66 432.12A70.5 70.5 0 0 1 1611.82 434.29L1583.48 448.73A38.7 38.7 0 0 0 1582.85 447.54Z" fill="#1e4e79" stroke="#1e4e79" stroke-width="0.3"/><path d="M1611.82 434.29A70.5 70.5 0 0 1 1612.89 436.51L1584.07 449.94A38.7 38.7 0 0 0 1583.48 448.73Z" fill="#a4a4a4" stroke="#a4a4a4" stroke-width="0.3"/><path d="M1612.89 436.51A70.5 70.5 0 0 1 1614.37 439.89L1584.88 451.80A38.7 38.7 0 0 0 1584.07 449.94Z" fill="#94d3ce" stroke="#94d3ce" stroke-width="0.3"/><path d="M1614.37 439.89A70.5 70.5 0 0 1 1615.93 488.44L1585.74 478.45A38.7 38.7 0 0 0 1584.88 451.80Z" fill="#f1ba43" stroke="#f1ba43" stroke-width="0.3"/><path d="M1615.93 488.44A70.5 70.5 0 0 1 1613.20 495.42L1584.24 482.29A38.7 38.7 0 0 0 1585.74 478.45Z" fill="#e07b27" stroke="#e07b27" stroke-width="0.3"/><path d="M1613.20 495.42A70.5 70.5 0 0 1 1611.82 498.31L1583.48 483.87A38.7 38.7 0 0 0 1584.24 482.29Z" fill="#a4a4a4" stroke="#a4a4a4" stroke-width="0.3"/><path d="M1611.82 498.31A70.5 70.5 0 0 1 1610.66 500.48L1582.85 485.06A38.7 38.7 0 0 0 1583.48 483.87Z" fill="#d6d6d6" stroke="#d6d6d6" stroke-width="0.3"/><path d="M1610.66 500.48A70.5 70.5 0 0 1 1609.43 502.61L1582.17 486.23A38.7 38.7 0 0 0 1582.85 485.06Z" fill="#a4a4a4" stroke="#a4a4a4" stroke-width="0.3"/><path d="M1609.43 502.61A70.5 70.5 0 0 1 1608.13 504.70L1581.46 487.38A38.7 38.7 0 0 0 1582.17 486.23Z" fill="#e07b27" stroke="#e07b27" stroke-width="0.3"/><path d="M1608.13 504.70A70.5 70.5 0 0 1 1606.32 507.34L1580.47 488.83A38.7 38.7 0 0 0 1581.46 487.38Z" fill="#d6d6d6" stroke="#d6d6d6" stroke-width="0.3"/><path d="M1606.32 507.34A70.5 70.5 0 0 1 1604.55 509.70L1579.50 490.13A38.7 38.7 0 0 0 1580.47 488.83Z" fill="#a4a4a4" stroke="#a4a4a4" stroke-width="0.3"/><path d="M1604.55 509.70A70.5 70.5 0 0 1 1589.44 524.05L1571.20 498.00A38.7 38.7 0 0 0 1579.50 490.13Z" fill="#6d5189" stroke="#6d5189" stroke-width="0.3"/><path d="M1589.44 524.05A70.5 70.5 0 0 1 1588.42 524.75L1570.64 498.38A38.7 38.7 0 0 0 1571.20 498.00Z" fill="#1e4e79" stroke="#1e4e79" stroke-width="0.3"/><path d="M1588.42 524.75A70.5 70.5 0 0 1 1577.67 530.70L1564.74 501.65A38.7 38.7 0 0 0 1570.64 498.38Z" fill="#f1ba43" stroke="#f1ba43" stroke-width="0.3"/><path d="M1577.67 530.70A70.5 70.5 0 0 1 1576.55 531.20L1564.12 501.92A38.7 38.7 0 0 0 1564.74 501.65Z" fill="#b3df92" stroke="#b3df92" stroke-width="0.3"/><path d="M1576.55 531.20A70.5 70.5 0 0 1 1564.26 535.13L1557.38 504.08A38.7 38.7 0 0 0 1564.12 501.92Z" fill="#4a8522" stroke="#4a8522" stroke-width="0.3"/><path d="M1564.26 535.13A70.5 70.5 0 0 1 1563.06 535.38L1556.72 504.22A38.7 38.7 0 0 0 1557.38 504.08Z" fill="#e07b27" stroke="#e07b27" stroke-width="0.3"/><path d="M1563.06 535.38A70.5 70.5 0 0 1 1555.14 536.53L1552.37 504.85A38.7 38.7 0 0 0 1556.72 504.22Z" fill="#2f7c6f" stroke="#2f7c6f" stroke-width="0.3"/><path d="M1555.14 536.53A70.5 70.5 0 0 1 1552.69 536.70L1551.03 504.95A38.7 38.7 0 0 0 1552.37 504.85Z" fill="#d6d6d6" stroke="#d6d6d6" stroke-width="0.3"/><path d="M1552.69 536.70A70.5 70.5 0 0 1 1550.23 536.79L1549.68 504.99A38.7 38.7 0 0 0 1551.03 504.95Z" fill="#4b9fd9" stroke="#4b9fd9" stroke-width="0.3"/><path d="M1550.23 536.79A70.5 70.5 0 0 1 1547.77 536.79L1548.32 504.99A38.7 38.7 0 0 0 1549.68 504.99Z" fill="#d6d6d6" stroke="#d6d6d6" stroke-width="0.3"/><path d="M1547.77 536.79A70.5 70.5 0 0 1 1545.31 536.70L1546.97 504.95A38.7 38.7 0 0 0 1548.32 504.99Z" fill="#66a23c" stroke="#66a23c" stroke-width="0.3"/><path d="M1545.31 536.70A70.5 70.5 0 0 1 1542.49 536.50L1545.43 504.83A38.7 38.7 0 0 0 1546.97 504.95Z" fill="#2f7c6f" stroke="#2f7c6f" stroke-width="0.3"/><path d="M1542.49 536.50A70.5 70.5 0 0 1 1512.90 526.86L1529.18 499.54A38.7 38.7 0 0 0 1545.43 504.83Z" fill="#4a8522" stroke="#4a8522" stroke-width="0.3"/><path d="M1512.90 526.86A70.5 70.5 0 0 1 1503.87 520.46L1524.23 496.03A38.7 38.7 0 0 0 1529.18 499.54Z" fill="#4b9fd9" stroke="#4b9fd9" stroke-width="0.3"/><path d="M1503.87 520.46A70.5 70.5 0 0 1 1501.83 518.69L1523.10 495.06A38.7 38.7 0 0 0 1524.23 496.03Z" fill="#8dc7e7" stroke="#8dc7e7" stroke-width="0.3"/><path d="M1501.83 518.69A70.5 70.5 0 0 1 1500.92 517.86L1522.61 494.60A38.7 38.7 0 0 0 1523.10 495.06Z" fill="#e07b27" stroke="#e07b27" stroke-width="0.3"/><path d="M1500.92 517.86A70.5 70.5 0 0 1 1491.96 507.74L1517.69 489.05A38.7 38.7 0 0 0 1522.61 494.60Z" fill="#e89c9e" stroke="#e89c9e" stroke-width="0.3"/><path d="M1491.96 507.74A70.5 70.5 0 0 1 1491.25 506.74L1517.30 488.50A38.7 38.7 0 0 0 1517.69 489.05Z" fill="#a4a4a4" stroke="#a4a4a4" stroke-width="0.3"/><path d="M1491.25 506.74A70.5 70.5 0 0 1 1487.95 501.55L1515.48 485.65A38.7 38.7 0 0 0 1517.30 488.50Z" fill="#b3df92" stroke="#b3df92" stroke-width="0.3"/><path d="M1487.95 501.55A70.5 70.5 0 0 1 1478.54 463.84L1510.32 464.95A38.7 38.7 0 0 0 1515.48 485.65Z" fill="#66a23c" stroke="#66a23c" stroke-width="0.3"/><path d="M1478.54 463.84A70.5 70.5 0 0 1 1479.57 454.06L1510.89 459.58A38.7 38.7 0 0 0 1510.32 464.95Z" fill="#b24b4b" stroke="#b24b4b" stroke-width="0.3"/></svg>
<div class="t" style="left:1701.12px;top:206.58px;font-size:13px;color:#555;font-weight:normal;font-style:normal;">Chart Type:</div>
<div class="t" style="left:1691.50px;top:239.18px;font-size:13px;color:#555;font-weight:normal;font-style:normal;">Chart Period:</div>
<div class="t" style="left:1696.57px;top:272.08px;font-size:13px;color:#555;font-weight:normal;font-style:normal;">Department:</div>
<div style="position:absolute;left:1773px;top:200px;width:112px;height:28px;border:1px solid #8f8f8f;border-radius:2px;box-sizing:border-box;background:#fff"></div>
<svg style="position:absolute;left:1867px;top:211px" width="10" height="6"><path d="M0 0H10L5 6Z" fill="#444"/></svg>
<div style="position:absolute;left:1773px;top:233px;width:112px;height:28px;border:1px solid #8f8f8f;border-radius:2px;box-sizing:border-box;background:#fff"></div>
<svg style="position:absolute;left:1867px;top:244px" width="10" height="6"><path d="M0 0H10L5 6Z" fill="#444"/></svg>
<div style="position:absolute;left:1773px;top:266px;width:112px;height:28px;border:1px solid #3b8bcc;border-radius:2px;box-sizing:border-box;background:#fff;box-shadow:0 0 2px #a8d0ef"></div>
<svg style="position:absolute;left:1867px;top:277px" width="10" height="6"><path d="M0 0H10L5 6Z" fill="#444"/></svg>
<div style="position:absolute;left:1779px;top:201px;width:80px;height:26px;overflow:hidden">
<div class="t" style="left:-5.12px;top:6.28px;font-size:13px;color:#333;font-weight:normal;font-style:normal;">orted by Dept.</div>
</div>
<div class="t" style="left:1778.42px;top:240.66px;font-size:13.5px;color:#333;font-weight:normal;font-style:normal;letter-spacing:-0.239px;">Months</div>
<div style="position:absolute;left:1778.9px;top:273.3px;width:15.5px;height:14.6px;background:#3a7cc1"></div>
<div class="t" style="left:1779.80px;top:274.08px;font-size:13px;color:#fff;font-weight:normal;font-style:normal;letter-spacing:-0.125px;">All</div>
<div class="t" style="left:1735.30px;top:305.08px;font-size:13px;color:#555;font-weight:normal;font-style:normal;">Show</div>
<div class="t" style="left:1708.37px;top:321.48px;font-size:13px;color:#555;font-weight:normal;font-style:normal;">Year/Year:</div>
<div style="position:absolute;left:1773px;top:314.5px;width:26px;height:4px;background:#8cc4e8;border-radius:2px"></div>
<div style="position:absolute;left:1787px;top:307.5px;width:18px;height:18px;background:#3587c4;border-radius:50%"></div>
<div class="t" style="left:592.48px;top:588.04px;font-size:16.5px;color:#333;font-weight:normal;font-style:normal;letter-spacing:-0.067px;">KPIs</div>
<div class="t" style="left:1668.26px;top:637.88px;font-size:13px;color:#222;font-weight:normal;font-style:normal;letter-spacing:0.180px;">Resize KPIs*</div>
<div style="position:absolute;left:1764px;top:641.8px;width:125px;height:4.4px;background:#9a9a9a;border-radius:2px"></div>
<div style="position:absolute;left:1764px;top:640px;width:8px;height:8px;background:#9a9a9a;border-radius:50%"></div>
<div style="position:absolute;left:1881px;top:640px;width:8px;height:8px;background:#9a9a9a;border-radius:50%"></div>
<div style="position:absolute;left:1792px;top:635.9px;width:16px;height:16px;background:#3a87c3;border-radius:50%"></div>
<div style="position:absolute;left:1879px;top:668px;width:17px;height:189px;background:#f1f1f1"></div>
<div style="position:absolute;left:1879px;top:685px;width:17px;height:71px;background:#c8c8c8"></div>
<svg style="position:absolute;left:1882px;top:671px" width="11" height="8"><path d="M1.2 6.8L5.5 2.4L9.8 6.8" fill="none" stroke="#555" stroke-width="2.3"/></svg>
<svg style="position:absolute;left:1882px;top:845px" width="11" height="8"><path d="M1.2 1.2L5.5 5.6L9.8 1.2" fill="none" stroke="#555" stroke-width="2.3"/></svg>
<div class="t" style="left:627.48px;top:701.62px;font-size:82px;color:#3b7a17;font-weight:bold;font-style:normal;transform:scaleX(1.0000);transform-origin:0 0;">42h</div>
<div class="t" style="left:864.72px;top:700.80px;font-size:82.5px;color:#383838;font-weight:bold;font-style:normal;transform:scaleX(0.9613);transform-origin:0 0;">5883</div>
<div class="t" style="left:1119.65px;top:700.50px;font-size:82.5px;color:#383838;font-weight:bold;font-style:normal;transform:scaleX(0.9606);transform-origin:0 0;">1370</div>
<div class="t" style="left:1695.03px;top:701.00px;font-size:82.5px;color:#383838;font-weight:bold;font-style:normal;transform:scaleX(0.9596);transform-origin:0 0;">0</div>
<div class="t" style="left:578.20px;top:821.34px;font-size:14px;color:#555;font-weight:normal;font-style:normal;letter-spacing:0.074px;">SLA Inspections</div>
<div class="t" style="left:833.18px;top:821.34px;font-size:14px;color:#555;font-weight:normal;font-style:normal;letter-spacing:0.121px;">PPE actifs (avec utilisateur)</div>
<div class="t" style="left:1088.24px;top:821.34px;font-size:14px;color:#555;font-weight:normal;font-style:normal;letter-spacing:0.107px;">Inspections completées cette année</div>
<div class="t" style="left:1342.04px;top:821.34px;font-size:14px;color:#555;font-weight:normal;font-style:normal;letter-spacing:0.127px;">Inspections faites/attendues, 49.3 %</div>
<div class="t" style="left:1598.18px;top:821.34px;font-size:14px;color:#555;font-weight:normal;font-style:normal;letter-spacing:0.005px;">Missing PM Schedules</div>
<div style="position:absolute;left:1818px;top:823.3px;width:4px;height:4px;background:#666;border-radius:50%"></div>
<div style="position:absolute;left:1825px;top:823.3px;width:4px;height:4px;background:#666;border-radius:50%"></div>
<div style="position:absolute;left:1832px;top:823.3px;width:4px;height:4px;background:#666;border-radius:50%"></div>
<svg style="position:absolute;left:0;top:0;pointer-events:none" width="1920" height="929"><path d="M1375.03 752.73A123.7 123.7 0 0 1 1549.97 752.73L1532.29 770.41A98.7 98.7 0 0 0 1392.71 770.41Z" fill="#f1ba43"/><path d="M1375.03 752.73A123.7 123.7 0 0 1 1549.97 752.73" fill="none" stroke="#444" stroke-width="1"/><line x1="1375.03" y1="752.73" x2="1371.50" y2="749.20" stroke="#444" stroke-width="1"/><line x1="1406.34" y1="729.98" x2="1404.07" y2="725.53" stroke="#444" stroke-width="1"/><line x1="1443.15" y1="718.02" x2="1442.37" y2="713.08" stroke="#444" stroke-width="1"/><line x1="1481.85" y1="718.02" x2="1482.63" y2="713.08" stroke="#444" stroke-width="1"/><line x1="1518.66" y1="729.98" x2="1520.93" y2="725.53" stroke="#444" stroke-width="1"/><line x1="1549.97" y1="752.73" x2="1553.50" y2="749.20" stroke="#444" stroke-width="1"/><line x1="1461.2" y1="728.4" x2="1462.3" y2="773.5" stroke="#111" stroke-width="3"/></svg>
<div class="t" style="left:1360.04px;top:734.89px;font-size:13.6px;color:#333;font-weight:normal;font-style:normal;transform:scaleX(0.9651);transform-origin:0 0;">0</div>
<div class="t" style="left:1391.45px;top:709.20px;font-size:13.6px;color:#333;font-weight:normal;font-style:normal;transform:scaleX(0.9923);transform-origin:0 0;">20</div>
<div class="t" style="left:1433.80px;top:695.70px;font-size:13.6px;color:#333;font-weight:normal;font-style:normal;transform:scaleX(0.9156);transform-origin:0 0;">40</div>
<div class="t" style="left:1477.00px;top:695.70px;font-size:13.6px;color:#333;font-weight:normal;font-style:normal;transform:scaleX(0.9566);transform-origin:0 0;">60</div>
<div class="t" style="left:1518.71px;top:709.20px;font-size:13.6px;color:#333;font-weight:normal;font-style:normal;transform:scaleX(0.9474);transform-origin:0 0;">80</div>
<div class="t" style="left:1550.49px;top:734.89px;font-size:13.6px;color:#333;font-weight:normal;font-style:normal;transform:scaleX(0.9333);transform-origin:0 0;">100</div>
<div style="position:absolute;left:0px;top:881px;width:1920px;height:1px;background:#d4d4d4"></div>
<div style="position:absolute;left:71px;top:882px;width:99px;height:3px;background:#3a87c3"></div>
<div class="t" style="left:81.60px;top:898.84px;font-size:14px;color:#3a87c3;font-weight:normal;font-style:normal;letter-spacing:0.162px;">Start Center</div>
<div class="t" style="left:181.00px;top:898.84px;font-size:14px;color:#555;font-weight:normal;font-style:normal;letter-spacing:0.031px;">Alert Management</div>
<div class="t" style="left:318.00px;top:898.84px;font-size:14px;color:#555;font-weight:normal;font-style:normal;letter-spacing:0.024px;">Assets</div>
<div class="t" style="left:382.00px;top:898.84px;font-size:14px;color:#555;font-weight:normal;font-style:normal;letter-spacing:0.065px;">Associate Custom Fields</div>
<div class="t" style="left:558.60px;top:898.84px;font-size:14px;color:#555;font-weight:normal;font-style:normal;letter-spacing:0.188px;">Grid Designer</div>
<div class="t" style="left:668.28px;top:898.84px;font-size:14px;color:#555;font-weight:normal;font-style:normal;letter-spacing:0.018px;">KPI Setup</div>
<div class="t" style="left:752.18px;top:898.84px;font-size:14px;color:#555;font-weight:normal;font-style:normal;letter-spacing:0.076px;">PM Schedules</div>
<div class="t" style="left:864.08px;top:898.84px;font-size:14px;color:#555;font-weight:normal;font-style:normal;letter-spacing:0.405px;">Parts</div>
<div class="t" style="left:919.08px;top:898.84px;font-size:14px;color:#555;font-weight:normal;font-style:normal;letter-spacing:0.200px;">Positions</div>
<div class="t" style="left:998.70px;top:898.84px;font-size:14px;color:#555;font-weight:normal;font-style:normal;letter-spacing:0.147px;">Screen Setup</div>
<div class="t" style="left:1106.20px;top:898.84px;font-size:14px;color:#555;font-weight:normal;font-style:normal;letter-spacing:0.240px;">Screens</div>
<div class="t" style="left:1180.20px;top:898.84px;font-size:14px;color:#555;font-weight:normal;font-style:normal;letter-spacing:0.133px;">Systems</div>
<div class="t" style="left:1256.22px;top:898.84px;font-size:14px;color:#555;font-weight:normal;font-style:normal;letter-spacing:-0.007px;">Task Plans</div>
<div class="t" style="left:1344.68px;top:898.84px;font-size:14px;color:#555;font-weight:normal;font-style:normal;letter-spacing:0.143px;">User Defined Screens</div>
<div class="t" style="left:1505.08px;top:898.84px;font-size:14px;color:#555;font-weight:normal;font-style:normal;letter-spacing:0.116px;">User Groups</div>
<div class="t" style="left:1606.38px;top:898.84px;font-size:14px;color:#555;font-weight:normal;font-style:normal;letter-spacing:0.204px;">User Setup</div>
<div class="t" style="left:1700.10px;top:898.84px;font-size:14px;color:#555;font-weight:normal;font-style:normal;letter-spacing:-0.345px;">Views</div>
<div class="t" style="left:1757.70px;top:898.84px;font-size:14px;color:#555;font-weight:normal;font-style:normal;letter-spacing:0.232px;">Work Orders</div>
<div style="position:absolute;left:0px;top:928px;width:48px;height:1px;background:#0f2630"></div>
<div style="position:absolute;left:48px;top:928px;width:344px;height:1px;background:#bdbdbd"></div>
<div style="position:absolute;left:392px;top:928px;width:1528px;height:1px;background:#0f2630"></div>
</body></html>
